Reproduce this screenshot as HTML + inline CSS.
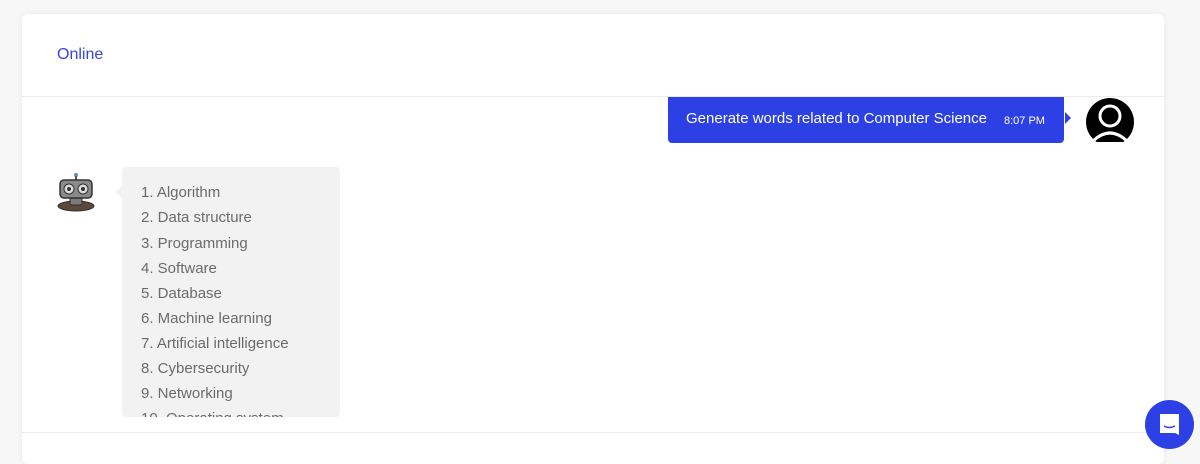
<!DOCTYPE html>
<html><head><style>
body{margin:0;width:1200px;height:450px;background:#f7f7f8;font-family:"Liberation Sans",sans-serif;overflow:hidden;position:relative}
.card{position:absolute;left:22px;top:14px;width:1142px;height:450px;background:#fff;border-radius:6px;box-shadow:0 0 6px rgba(0,0,0,.06)}
.hdr{position:absolute;left:0;top:0;width:100%;height:82px;border-bottom:1px solid #ececec}
.online{position:absolute;left:35px;top:32px;color:#3346e0;font-size:16px}
.ub{position:absolute;left:646px;top:83px;width:396px;height:46px;background:#2c40e6;border-radius:0 0 4px 4px;color:#fff}
.ub .t{position:absolute;left:18px;top:13px;font-size:15px}
.ub .tm{position:absolute;left:336px;top:18px;font-size:11px}
.ar{position:absolute;left:1043px;top:98px;border-left:6px solid #2c40e6;border-top:6px solid transparent;border-bottom:6px solid transparent}
.bb{position:absolute;left:100px;top:153px;width:218px;height:250px;background:#f2f2f2;border-radius:4px;overflow:hidden}
.bb div{position:absolute;left:19px;font-size:15px;color:#6b6b6b}
.bar{position:absolute;left:93px;top:172px;border-right:7px solid #f2f2f2;border-top:6px solid transparent;border-bottom:6px solid transparent}
.foot{position:absolute;left:0;top:418px;width:100%;border-top:1px solid #ececec}
.fab{position:absolute;left:1145px;top:400px;width:49px;height:49px;border-radius:50%;background:#2c40e6}
</style></head><body>
<div class="card">
<div class="hdr"><div class="online">Online</div></div>
<div class="ub"><span class="t">Generate words related to Computer Science</span><span class="tm">8:07 PM</span></div>
<div class="ar"></div>
<svg style="position:absolute;left:1063px;top:84px" width="50" height="44" viewBox="0 0 50 44">
<circle cx="25" cy="24" r="24" fill="#000"/>
<circle cx="25" cy="18" r="10" fill="none" stroke="#fff" stroke-width="3"/>
<path d="M7 44 Q25 26 43 44" stroke="#fff" stroke-width="3" fill="none"/>
</svg>
<svg style="position:absolute;left:35px;top:158px" width="40" height="42" viewBox="0 0 40 42">
<circle cx="19" cy="3" r="2" fill="#6b8db0"/><rect x="18" y="4" width="2" height="4" fill="#555"/>
<ellipse cx="19" cy="34" rx="18" ry="5" fill="#5b4a3a" stroke="#333"/>
<rect x="13" y="24" width="12" height="9" rx="2" fill="#7a7a7a" stroke="#333"/>
<rect x="3" y="8" width="32" height="18" rx="4" fill="#8a8a8a" stroke="#333" stroke-width="1.5"/>
<circle cx="12" cy="17" r="5" fill="#ddd" stroke="#333"/><circle cx="12" cy="17" r="2" fill="#333"/>
<circle cx="26" cy="17" r="5" fill="#ddd" stroke="#333"/><circle cx="26" cy="17" r="2" fill="#333"/>
</svg>
<div class="bar"></div>
<div class="bb">
<div style="top:17px">1. Algorithm</div>
<div style="top:42px">2. Data structure</div>
<div style="top:68px">3. Programming</div>
<div style="top:93px">4. Software</div>
<div style="top:118px">5. Database</div>
<div style="top:143px">6. Machine learning</div>
<div style="top:168px">7. Artificial intelligence</div>
<div style="top:193px">8. Cybersecurity</div>
<div style="top:218px">9. Networking</div>
<div style="top:243px">10. Operating system</div>
</div>
<div class="foot"></div>
</div>
<div class="fab"><svg width="49" height="49" viewBox="0 0 49 49"><path d="M15 14 h19 v21 l-4 -2 h-15 z" fill="#fff"/><path d="M19 26 q5 3 11 0" stroke="#2c40e6" stroke-width="1.5" fill="none"/></svg></div>
</body></html>
